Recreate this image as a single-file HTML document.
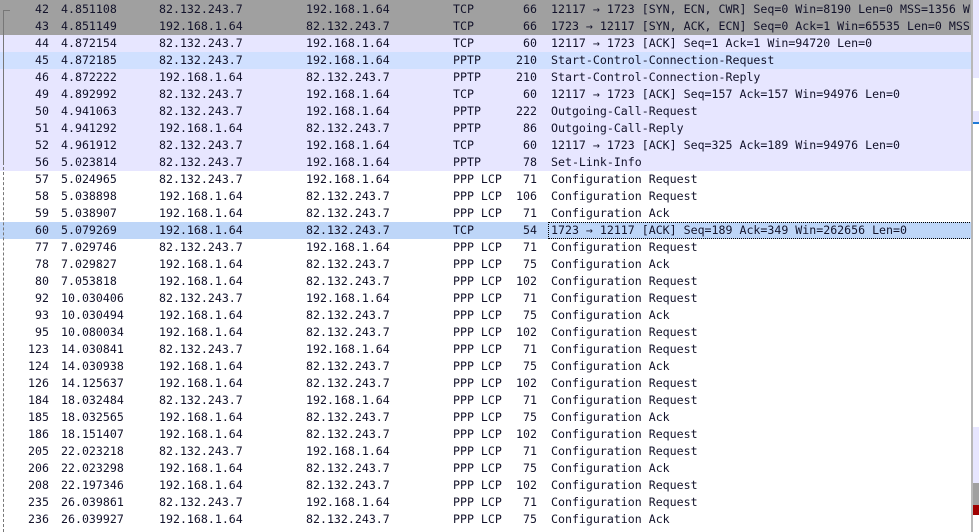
<!DOCTYPE html>
<html><head><style>
body{margin:0;width:979px;height:532px;overflow:hidden;background:#fff;position:relative;font-family:"DejaVu Sans Mono","Liberation Mono",monospace;font-size:11.6px;color:#12122a}
.r{position:absolute;left:0;width:971px;height:17px;line-height:17px;white-space:pre}
.r span{position:absolute;top:0}
.n{right:922px;text-align:right}
.t{left:61px}.s{left:159px}.d{left:306px}.p{left:453px}
.l{right:434px;text-align:right}.i{left:551px}
.g{background:#a0a0a0}.v{background:#e7e6ff}.b{background:#d0e0ff}.sel{background:#bed6f8}
.sb{position:absolute;left:971px;top:0;width:2px;height:532px;background:#b8b8b8}
.st{position:absolute;left:973px;width:6px}
</style></head><body>
<div class="r g" style="top:0;height:18px;line-height:19px"><span class="n">42</span><span class="t">4.851108</span><span class="s">82.132.243.7</span><span class="d">192.168.1.64</span><span class="p">TCP</span><span class="l">66</span><span class="i">12117 → 1723 [SYN, ECN, CWR] Seq=0 Win=8190 Len=0 MSS=1356 W</span></div>
<div class="r g" style="top:18px"><span class="n">43</span><span class="t">4.851149</span><span class="s">192.168.1.64</span><span class="d">82.132.243.7</span><span class="p">TCP</span><span class="l">66</span><span class="i">1723 → 12117 [SYN, ACK, ECN] Seq=0 Ack=1 Win=65535 Len=0 MSS</span></div>
<div class="r v" style="top:35px"><span class="n">44</span><span class="t">4.872154</span><span class="s">82.132.243.7</span><span class="d">192.168.1.64</span><span class="p">TCP</span><span class="l">60</span><span class="i">12117 → 1723 [ACK] Seq=1 Ack=1 Win=94720 Len=0</span></div>
<div class="r b" style="top:52px"><span class="n">45</span><span class="t">4.872185</span><span class="s">82.132.243.7</span><span class="d">192.168.1.64</span><span class="p">PPTP</span><span class="l">210</span><span class="i">Start-Control-Connection-Request</span></div>
<div class="r v" style="top:69px"><span class="n">46</span><span class="t">4.872222</span><span class="s">192.168.1.64</span><span class="d">82.132.243.7</span><span class="p">PPTP</span><span class="l">210</span><span class="i">Start-Control-Connection-Reply</span></div>
<div class="r v" style="top:86px"><span class="n">49</span><span class="t">4.892992</span><span class="s">82.132.243.7</span><span class="d">192.168.1.64</span><span class="p">TCP</span><span class="l">60</span><span class="i">12117 → 1723 [ACK] Seq=157 Ack=157 Win=94976 Len=0</span></div>
<div class="r v" style="top:103px"><span class="n">50</span><span class="t">4.941063</span><span class="s">82.132.243.7</span><span class="d">192.168.1.64</span><span class="p">PPTP</span><span class="l">222</span><span class="i">Outgoing-Call-Request</span></div>
<div class="r v" style="top:120px"><span class="n">51</span><span class="t">4.941292</span><span class="s">192.168.1.64</span><span class="d">82.132.243.7</span><span class="p">PPTP</span><span class="l">86</span><span class="i">Outgoing-Call-Reply</span></div>
<div class="r v" style="top:137px"><span class="n">52</span><span class="t">4.961912</span><span class="s">82.132.243.7</span><span class="d">192.168.1.64</span><span class="p">TCP</span><span class="l">60</span><span class="i">12117 → 1723 [ACK] Seq=325 Ack=189 Win=94976 Len=0</span></div>
<div class="r v" style="top:154px"><span class="n">56</span><span class="t">5.023814</span><span class="s">82.132.243.7</span><span class="d">192.168.1.64</span><span class="p">PPTP</span><span class="l">78</span><span class="i">Set-Link-Info</span></div>
<div class="r" style="top:171px"><span class="n">57</span><span class="t">5.024965</span><span class="s">82.132.243.7</span><span class="d">192.168.1.64</span><span class="p">PPP LCP</span><span class="l">71</span><span class="i">Configuration Request</span></div>
<div class="r" style="top:188px"><span class="n">58</span><span class="t">5.038898</span><span class="s">192.168.1.64</span><span class="d">82.132.243.7</span><span class="p">PPP LCP</span><span class="l">106</span><span class="i">Configuration Request</span></div>
<div class="r" style="top:205px"><span class="n">59</span><span class="t">5.038907</span><span class="s">192.168.1.64</span><span class="d">82.132.243.7</span><span class="p">PPP LCP</span><span class="l">71</span><span class="i">Configuration Ack</span></div>
<div class="r sel" style="top:222px"><span class="n">60</span><span class="t">5.079269</span><span class="s">192.168.1.64</span><span class="d">82.132.243.7</span><span class="p">TCP</span><span class="l">54</span><span class="i" style="left:548px;width:420px;height:15px;line-height:15px;padding-left:2px;border:1px dotted #000">1723 → 12117 [ACK] Seq=189 Ack=349 Win=262656 Len=0</span></div>
<div class="r" style="top:239px"><span class="n">77</span><span class="t">7.029746</span><span class="s">82.132.243.7</span><span class="d">192.168.1.64</span><span class="p">PPP LCP</span><span class="l">71</span><span class="i">Configuration Request</span></div>
<div class="r" style="top:256px"><span class="n">78</span><span class="t">7.029827</span><span class="s">192.168.1.64</span><span class="d">82.132.243.7</span><span class="p">PPP LCP</span><span class="l">75</span><span class="i">Configuration Ack</span></div>
<div class="r" style="top:273px"><span class="n">80</span><span class="t">7.053818</span><span class="s">192.168.1.64</span><span class="d">82.132.243.7</span><span class="p">PPP LCP</span><span class="l">102</span><span class="i">Configuration Request</span></div>
<div class="r" style="top:290px"><span class="n">92</span><span class="t">10.030406</span><span class="s">82.132.243.7</span><span class="d">192.168.1.64</span><span class="p">PPP LCP</span><span class="l">71</span><span class="i">Configuration Request</span></div>
<div class="r" style="top:307px"><span class="n">93</span><span class="t">10.030494</span><span class="s">192.168.1.64</span><span class="d">82.132.243.7</span><span class="p">PPP LCP</span><span class="l">75</span><span class="i">Configuration Ack</span></div>
<div class="r" style="top:324px"><span class="n">95</span><span class="t">10.080034</span><span class="s">192.168.1.64</span><span class="d">82.132.243.7</span><span class="p">PPP LCP</span><span class="l">102</span><span class="i">Configuration Request</span></div>
<div class="r" style="top:341px"><span class="n">123</span><span class="t">14.030841</span><span class="s">82.132.243.7</span><span class="d">192.168.1.64</span><span class="p">PPP LCP</span><span class="l">71</span><span class="i">Configuration Request</span></div>
<div class="r" style="top:358px"><span class="n">124</span><span class="t">14.030938</span><span class="s">192.168.1.64</span><span class="d">82.132.243.7</span><span class="p">PPP LCP</span><span class="l">75</span><span class="i">Configuration Ack</span></div>
<div class="r" style="top:375px"><span class="n">126</span><span class="t">14.125637</span><span class="s">192.168.1.64</span><span class="d">82.132.243.7</span><span class="p">PPP LCP</span><span class="l">102</span><span class="i">Configuration Request</span></div>
<div class="r" style="top:392px"><span class="n">184</span><span class="t">18.032484</span><span class="s">82.132.243.7</span><span class="d">192.168.1.64</span><span class="p">PPP LCP</span><span class="l">71</span><span class="i">Configuration Request</span></div>
<div class="r" style="top:409px"><span class="n">185</span><span class="t">18.032565</span><span class="s">192.168.1.64</span><span class="d">82.132.243.7</span><span class="p">PPP LCP</span><span class="l">75</span><span class="i">Configuration Ack</span></div>
<div class="r" style="top:426px"><span class="n">186</span><span class="t">18.151407</span><span class="s">192.168.1.64</span><span class="d">82.132.243.7</span><span class="p">PPP LCP</span><span class="l">102</span><span class="i">Configuration Request</span></div>
<div class="r" style="top:443px"><span class="n">205</span><span class="t">22.023218</span><span class="s">82.132.243.7</span><span class="d">192.168.1.64</span><span class="p">PPP LCP</span><span class="l">71</span><span class="i">Configuration Request</span></div>
<div class="r" style="top:460px"><span class="n">206</span><span class="t">22.023298</span><span class="s">192.168.1.64</span><span class="d">82.132.243.7</span><span class="p">PPP LCP</span><span class="l">75</span><span class="i">Configuration Ack</span></div>
<div class="r" style="top:477px"><span class="n">208</span><span class="t">22.197346</span><span class="s">192.168.1.64</span><span class="d">82.132.243.7</span><span class="p">PPP LCP</span><span class="l">102</span><span class="i">Configuration Request</span></div>
<div class="r" style="top:494px"><span class="n">235</span><span class="t">26.039861</span><span class="s">82.132.243.7</span><span class="d">192.168.1.64</span><span class="p">PPP LCP</span><span class="l">71</span><span class="i">Configuration Request</span></div>
<div class="r" style="top:511px"><span class="n">236</span><span class="t">26.039927</span><span class="s">192.168.1.64</span><span class="d">82.132.243.7</span><span class="p">PPP LCP</span><span class="l">75</span><span class="i">Configuration Ack</span></div>
<div style="position:absolute;left:3px;top:10px;width:7px;height:1px;background:#777"></div>
<div style="position:absolute;left:3px;top:10px;width:1px;height:152px;background:#777"></div>
<div style="position:absolute;left:3px;top:162px;width:0;height:370px;border-left:1px dashed #777"></div>
<div class="sb"></div>
<div class="st" style="top:0;height:78px;background:#e7e6ff"></div>
<div class="st" style="top:111px;height:11px;background:#e7e6ff"></div>
<div class="st" style="top:122px;height:2px;background:#1e7ad8"></div>
<div class="st" style="top:427px;height:56px;background:#e7e6ff"></div>
<div class="st" style="top:483px;height:22px;background:#a0a0a0"></div>
<div class="st" style="top:505px;height:10px;background:#a00000"></div>
</body></html>
